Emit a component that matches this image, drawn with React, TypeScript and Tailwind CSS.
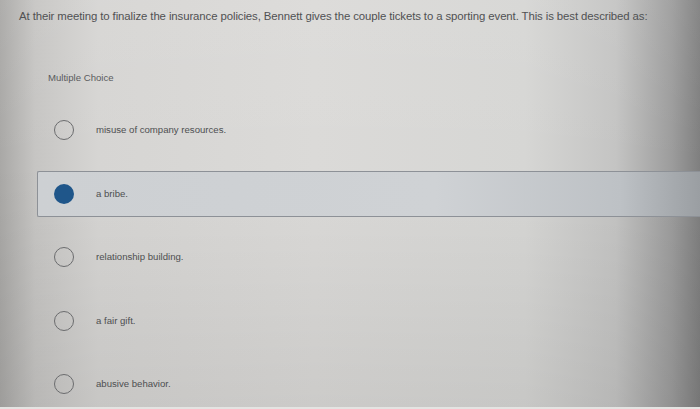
import React from "react";

const options = [
  "misuse of company resources.",
  "a bribe.",
  "relationship building.",
  "a fair gift.",
  "abusive behavior.",
];

function Radio({ checked }: { checked: boolean }) {
  if (checked) {
    return <span className="block h-[20px] w-[20px] shrink-0 rounded-full bg-[#1f568a]" />;
  }
  return <span className="block h-[20px] w-[20px] shrink-0 rounded-full border-[1.5px] border-[#6b6c6e]" />;
}

export default function App() {
  const selected = 1;
  return (
    <div
      className="relative flex h-[409px] w-[700px] flex-col overflow-hidden bg-[linear-gradient(to_right,#a9a8a6_0%,#c6c5c3_5%,#d6d5d3_14%,#dbdad8_45%,#d6d6d4_75%,#c4c4c3_88%,#9c9c9c_96%,#7f7f7f_100%)] font-['Liberation_Sans',Arial,sans-serif] text-[#545557]"
    >
      <div className="pointer-events-none absolute inset-0 bg-[linear-gradient(to_bottom,rgba(255,255,255,0.06)_0%,rgba(0,0,0,0)_40%,rgba(0,0,0,0.07)_100%)]" />

      <div className="relative pl-[19px] pt-[9px] text-[11.4px] leading-[14px] tracking-[-0.1px] text-[#505153]">
        At their meeting to finalize the insurance policies, Bennett gives the couple tickets to a sporting event. This is best described as:
      </div>

      <div className="relative pl-[48px] pt-[50px] text-[9.6px] leading-[10px] text-[#5a5b5d]">Multiple Choice</div>

      <div className="relative mt-[24px] flex flex-col gap-[17.5px]">
        {options.map((o, i) => {
          const isSel = i === selected;
          return (
            <div
              key={o}
              className={
                isSel
                  ? "ml-[37px] flex h-[46px] items-center rounded-l-[2px] border border-r-0 border-[#8d9197] bg-[linear-gradient(to_right,#cdd0d3_0%,#cfd2d5_60%,#bdc1c5_88%,#9a9ea2_100%)] pl-[16px]"
                  : "ml-[37px] flex h-[46px] items-center border border-transparent pl-[16px]"
              }
            >
              <Radio checked={isSel} />
              <span className="ml-[22px] text-[9.6px] leading-[10px] text-[#4e4f51]">{o}</span>
            </div>
          );
        })}
      </div>

      <div className="absolute bottom-0 left-0 h-[2px] w-full bg-[#e4e4e2]" />
    </div>
  );
}
